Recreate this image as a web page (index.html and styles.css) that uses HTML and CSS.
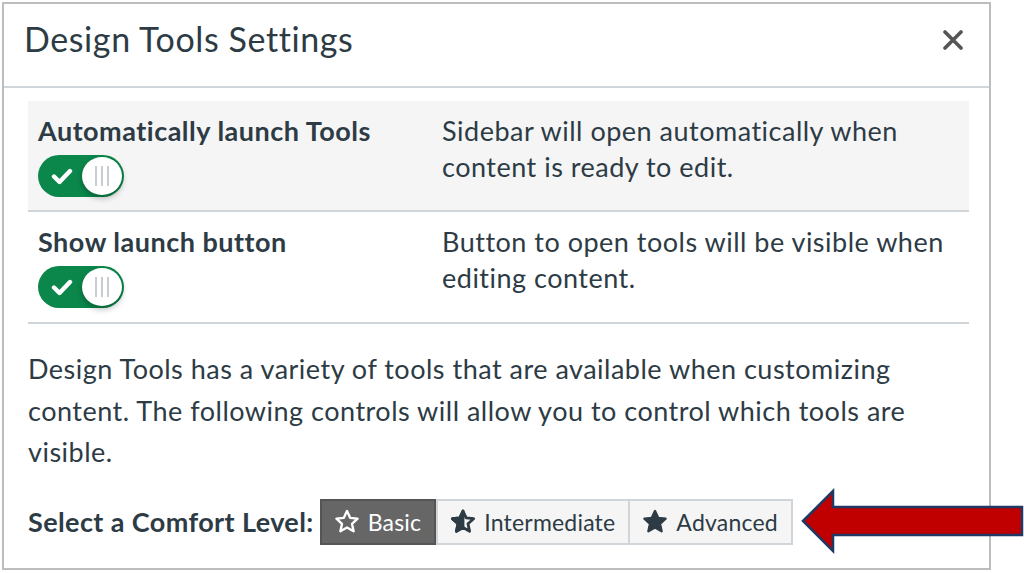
FILE: index.html
```html
<!DOCTYPE html>
<html lang="en">
<head>
	<meta charset="UTF-8">
	<title>Design Tools Settings</title>
	<link rel="stylesheet" href="styles.css">
</head>
<body>
	<div class="dialog">
		<div class="header">
			<h1 class="title">Design Tools Settings</h1>
			<svg class="close" width="20" height="20" viewBox="0 0 20 20">
				<path d="M2 2 L18 18 M18 2 L2 18" stroke="#555" stroke-width="3.6" stroke-linecap="round"/>
			</svg>
		</div>
		<div class="body">
			<div class="row shaded">
				<div class="label">
					<div class="label-text">Automatically launch Tools</div>
					<div class="toggle">
						<svg class="check" width="22" height="18" viewBox="0 0 22 18">
							<path d="M3 9.5 L8.5 15 L19 4" fill="none" stroke="#fff" stroke-width="4.4" stroke-linecap="round" stroke-linejoin="round"/>
						</svg>
						<div class="knob"><span></span><span></span><span></span></div>
					</div>
				</div>
				<div class="desc">Sidebar will open automatically when content is ready to edit.</div>
			</div>
			<div class="row">
				<div class="label">
					<div class="label-text">Show launch button</div>
					<div class="toggle">
						<svg class="check" width="22" height="18" viewBox="0 0 22 18">
							<path d="M3 9.5 L8.5 15 L19 4" fill="none" stroke="#fff" stroke-width="4.4" stroke-linecap="round" stroke-linejoin="round"/>
						</svg>
						<div class="knob"><span></span><span></span><span></span></div>
					</div>
				</div>
				<div class="desc">Button to open tools will be visible when editing content.</div>
			</div>
			<p class="intro">Design Tools has a variety of tools that are available when customizing content. The following controls will allow you to control which tools are visible.</p>
			<div class="comfort">
				<span class="comfort-label">Select a Comfort Level:</span>
				<div class="levels">
					<div class="level active">
						<svg class="star" viewBox="0 0 24 23">
							<path d="M12 1.8 L14.9 8.1 L21.8 8.9 L16.6 13.6 L18.1 20.5 L12 17 L5.9 20.5 L7.4 13.6 L2.2 8.9 L9.1 8.1 Z" fill="none" stroke="#fff" stroke-width="2.2" stroke-linejoin="round"/>
						</svg>
						Basic
					</div>
					<div class="level">
						<svg class="star" viewBox="0 0 24 23">
							<path d="M12 1.8 L14.9 8.1 L21.8 8.9 L16.6 13.6 L18.1 20.5 L12 17 L5.9 20.5 L7.4 13.6 L2.2 8.9 L9.1 8.1 Z" fill="none" stroke="#2d3b45" stroke-width="2.6" stroke-linejoin="round"/>
							<path d="M12 1.8 L12 17 L5.9 20.5 L7.4 13.6 L2.2 8.9 L9.1 8.1 Z" fill="#2d3b45" stroke="#2d3b45" stroke-width="2.6" stroke-linejoin="round"/>
						</svg>
						Intermediate
					</div>
					<div class="level">
						<svg class="star" viewBox="0 0 24 23">
							<path d="M12 1.8 L14.9 8.1 L21.8 8.9 L16.6 13.6 L18.1 20.5 L12 17 L5.9 20.5 L7.4 13.6 L2.2 8.9 L9.1 8.1 Z" fill="#2d3b45" stroke="#2d3b45" stroke-width="2.2" stroke-linejoin="round"/>
						</svg>
						Advanced
					</div>
				</div>
			</div>
		</div>
	</div>
	<svg class="arrow" width="224" height="66" viewBox="0 0 224 66">
		<path d="M2 33 L32 3 L32 19 L221 19 L221 47 L32 47 L32 63 Z" fill="#c00000" stroke="#203864" stroke-width="2.5" stroke-linejoin="miter"/>
	</svg>
</body>
</html>
```

FILE: styles.css
```css
*{
	margin: 0;
	padding: 0;
	box-sizing: border-box;
}
body{
	background: #fff;
	font-family: Lato, "Open Sans", sans-serif;
	color: #2d3b45;
	position: relative;
}
.dialog{
	width: 989px;
	height: 568px;
	margin: 2px 0 0 2px;
	border: 2px solid #bdbdbd;
	display: flex;
	flex-direction: column;
}
.header{
	height: 84px;
	border-bottom: 2px solid #d0d5d9;
	display: flex;
	justify-content: space-between;
	align-items: flex-start;
	padding: 14px 26px 0 20px;
}
.title{
	font-size: 34px;
	font-weight: 400;
	line-height: 42px;
	letter-spacing: 0.6px;
}
.close{
	margin-top: 12px;
}
.body{
	padding: 13px 20px 0 24px;
}
.row{
	display: grid;
	grid-template-columns: 404px 1fr;
	padding: 12px 10px 12px 10px;
	border-bottom: 2px solid #d0d5d9;
	height: 112px;
}
.row.shaded{
	background: #f5f5f5;
	height: 111px;
}
.label-text{
	font-size: 27px;
	font-weight: 700;
	line-height: 36px;
	letter-spacing: 0.5px;
}
.desc{
	font-size: 27px;
	line-height: 36px;
	letter-spacing: 0.5px;
}
.toggle{
	margin-top: 6px;
	width: 86px;
	height: 42px;
	border-radius: 21px;
	background: #0b874b;
	display: flex;
	align-items: center;
	justify-content: space-between;
	padding: 0 2px 0 13px;
}
.check{
	display: block;
}
.knob{
	width: 40px;
	height: 38px;
	border-radius: 50%;
	background: #fff;
	box-shadow: 0 3px 6px rgba(0,0,0,0.3);
	display: flex;
	justify-content: center;
	align-items: center;
	gap: 4px;
}
.knob span{
	width: 2px;
	height: 20px;
	background: #c7cdd1;
}
.intro{
	font-size: 27px;
	line-height: 41.5px;
	letter-spacing: 0.5px;
	margin-top: 24px;
	padding-right: 6px;
}
.comfort{
	display: flex;
	align-items: center;
	gap: 6px;
	margin-top: 26px;
}
.comfort-label{
	font-size: 27px;
	font-weight: 700;
	letter-spacing: 0.4px;
}
.levels{
	display: flex;
	border: 2px solid #d0d5d9;
	height: 46px;
}
.level{
	display: flex;
	align-items: center;
	gap: 8px;
	padding: 0 13px 0 12px;
	font-size: 23px;
	letter-spacing: 0.2px;
	background: #f5f5f5;
	color: #2d3b45;
	border-left: 2px solid #d0d5d9;
}
.star{
	width: 26px;
	height: 25px;
}
.level:first-child{
	border-left: none;
}
.level.active{
	background: #666;
	color: #fff;
	margin: -2px 0 -2px -2px;
	border: 2px solid #555;
}
.arrow{
	position: absolute;
	left: 801px;
	top: 488px;
}
```
